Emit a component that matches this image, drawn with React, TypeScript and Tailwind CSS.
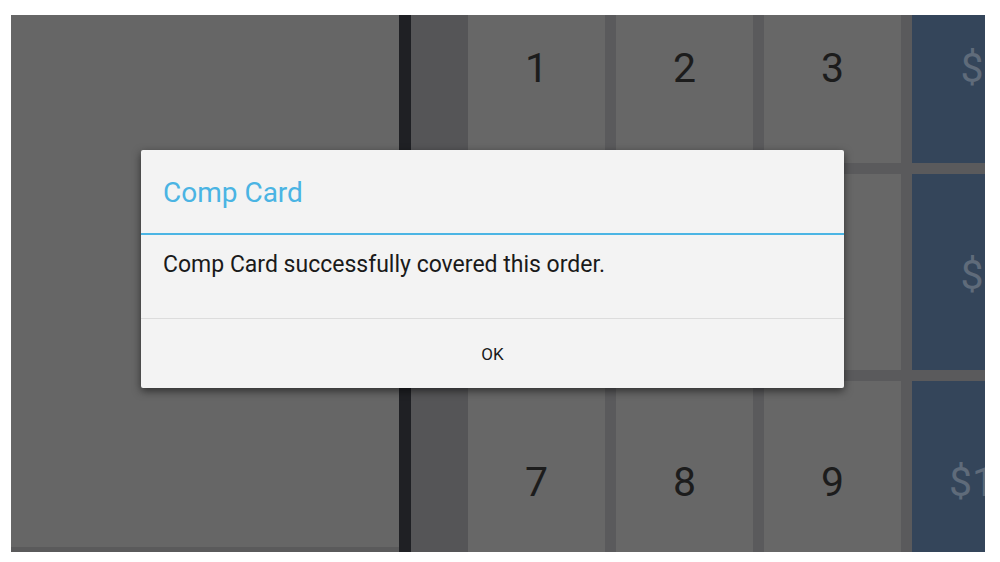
import React from "react";

const rows = [
  ["1", "2", "3", "$10"],
  ["4", "5", "6", "$50"],
  ["7", "8", "9", "$100"],
];

function Key({ label }: { label: string }) {
  const cash = label.startsWith("$");
  return (
    <div
      className={
        cash
          ? "w-[166px] h-[196px] shrink-0 bg-[#34455a] flex items-center justify-center pt-[8px] text-[41px] text-[#5f6b7a]"
          : "w-[137px] h-[196px] shrink-0 bg-[#676767] flex items-center justify-center pt-[8px] text-[41px] text-[#1c1c1c]"
      }
    >
      {label}
    </div>
  );
}

function CompDialog() {
  return (
    <div className="absolute left-[141px] top-[150px] w-[703px] bg-[#f3f3f3] rounded-[2px] shadow-[0_3px_8px_rgba(0,0,0,0.55)] flex flex-col">
      <div className="h-[83px] flex items-center pl-[22px] pt-[2px] text-[28px] text-[#4ab4e3]">
        Comp Card
      </div>
      <div className="h-[2px] bg-[#4bb5e4]" />
      <div className="h-[83px] pl-[22px] pt-[14px] text-[23px] leading-[32px] text-[#1a1a1a]">
        Comp Card successfully covered this order.
      </div>
      <div className="h-px bg-[#dcdcdc]" />
      <div className="h-[69px] flex items-center justify-center pt-[2px] text-[17px] text-[#1a1a1a]">
        OK
      </div>
    </div>
  );
}

export default function App() {
  return (
    <div
      className="relative w-[1000px] h-[562px] bg-white overflow-hidden"
      style={{ fontFamily: "Roboto, 'Noto Sans', sans-serif" }}
    >
      <div className="absolute left-[11px] top-[15px] w-[974px] h-[537px] flex overflow-hidden">
        {/* left order panel */}
        <div className="w-[388px] h-full flex flex-col bg-[#666666]">
          <div className="grow" />
          <div className="h-[5px] bg-[#5a5a5b]" />
        </div>
        <div className="w-[12px] h-full bg-[#1f2024]" />
        <div className="w-[57px] h-full bg-[#555557]" />
        {/* keypad */}
        <div className="w-[517px] h-full overflow-hidden bg-[#5a5a5c]">
          <div className="-mt-[48px] flex flex-col gap-[11px]">
            {rows.map((row, i) => (
              <div key={i} className="flex gap-[11px]">
                {row.map((k) => (
                  <Key key={k} label={k} />
                ))}
              </div>
            ))}
          </div>
        </div>
      </div>
      <CompDialog />
    </div>
  );
}
